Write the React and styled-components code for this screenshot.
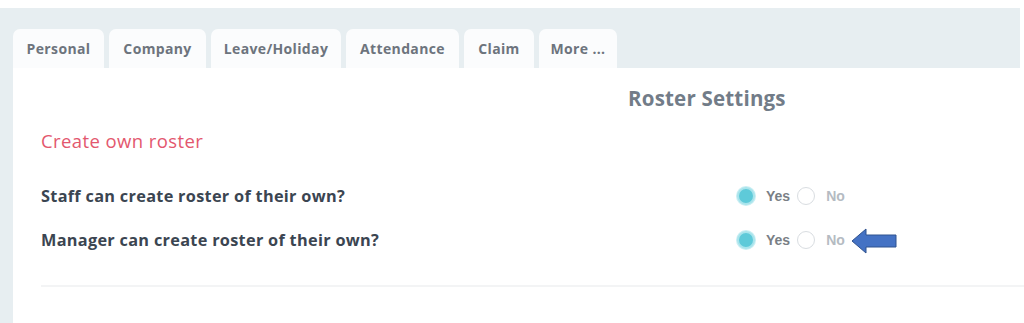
import React from "react";
import styled, {createGlobalStyle} from "styled-components";

const GlobalStyle = createGlobalStyle`
    html, body {
        margin: 0;
        padding: 0;
        background: #ffffff;
        overflow: hidden;
    }
    body {
        font-family: "Open Sans", "Noto Sans", Arial, sans-serif;
    }
`

const Page = styled.div`
    width: 1024px;
    height: 323px;
    padding-top: 8px;
    box-sizing: border-box;
    background: #ffffff;
`
const Frame = styled.div`
    width: 1020px;
    height: 315px;
    box-sizing: border-box;
    background: #e7eef1;
    padding: 21px 0 0 13px;
    display: flex;
    flex-direction: column;
`
const Tabs = styled.div`
    display: flex;
    gap: 5px;
    height: 39px;
`
const Tab = styled.div`
    display: flex;
    align-items: center;
    justify-content: center;
    width: ${p => p.w}px;
    background: #fbfcfd;
    border-radius: 7px 7px 0 0;
    font-size: 14px;
    font-weight: 700;
    color: #6d747d;
    letter-spacing: 0.35px;
`
const Panel = styled.div`
    flex: 1;
    margin-right: -4px;
    background: #ffffff;
    padding: 0 0 0 28px;
    display: flex;
    flex-direction: column;
`
const Title = styled.h2`
    margin: 18px 0 0 0;
    padding-left: 587px;
    font-size: 20.5px;
    font-weight: 700;
    color: #727c88;
    letter-spacing: 0.2px;
    line-height: 24px;
`
const Section = styled.div`
    margin-top: 20px;
    font-size: 18.5px;
    color: #e3576e;
    line-height: 22px;
    letter-spacing: 0.4px;
`
const Rows = styled.div`
    margin-top: 33px;
    display: flex;
    flex-direction: column;
    gap: 19px;
`
const Row = styled.div`
    display: grid;
    grid-template-columns: 695px auto;
    align-items: center;
    height: 22px;
`
const Label = styled.div`
    font-size: 16.3px;
    line-height: 22px;
    font-weight: 700;
    color: #3b4551;
    letter-spacing: 0.3px;
`
const Choices = styled.div`
    display: flex;
    align-items: center;
    padding-left: 1px;
`
const Option = styled.div`
    display: flex;
    align-items: center;
    gap: 11px;
    margin-right: 7px;
    font-family: "Liberation Sans", Arial, sans-serif;
    font-size: 14px;
    font-weight: 700;
    color: ${p => p.checked ? "#7a7f86" : "#b5bbc2"};
`
const Radio = styled.span`
    width: 18px;
    height: 18px;
    border-radius: 50%;
    box-sizing: border-box;
    display: inline-block;
    background: ${p => p.checked ? "#5ecad9" : "#ffffff"};
    border: ${p => p.checked ? "2px solid #a9e4ec" : "1px solid #d9dde1"};
    box-shadow: ${p => p.checked ? "0 0 0 1px #c9eef3" : "none"};
`
const Arrow = styled.svg`
    margin-left: -1px;
    margin-top: 2px;
`
const Divider = styled.div`
    margin-top: 37px;
    height: 2px;
    background: #f3f4f5;
`

function Choice({checked, children}) {
    return (
        <Option checked={checked}>
            <Radio checked={checked}/>
            {children}
        </Option>
    )
}

const tabs = [
    {name: "Personal", w: 91},
    {name: "Company", w: 97},
    {name: "Leave/Holiday", w: 130},
    {name: "Attendance", w: 113},
    {name: "Claim", w: 70},
    {name: "More ...", w: 78},
]

const rows = [
    {label: "Staff can create roster of their own?", arrow: false},
    {label: "Manager can create roster of their own?", arrow: true},
]

function App() {
    return (
        <Page>
            <GlobalStyle/>
            <Frame>
                <Tabs>
                    {tabs.map(t => <Tab key={t.name} w={t.w}>{t.name}</Tab>)}
                </Tabs>
                <Panel>
                    <Title>Roster Settings</Title>
                    <Section>Create own roster</Section>
                    <Rows>
                        {rows.map(r => <Row key={r.label}>
                            <Label>{r.label}</Label>
                            <Choices>
                                <Choice checked>Yes</Choice>
                                <Choice>No</Choice>
                                {r.arrow &&
                                    <Arrow width="46" height="26" viewBox="0 0 46 26">
                                        <path d="M1 13 L15 1 L15 7 L45 7 L45 19 L15 19 L15 25 Z"
                                              fill="#4472c4" stroke="#2f528f" strokeWidth="1"/>
                                    </Arrow>}
                            </Choices>
                        </Row>)}
                    </Rows>
                    <Divider/>
                </Panel>
            </Frame>
        </Page>
    );
}

export default App;
